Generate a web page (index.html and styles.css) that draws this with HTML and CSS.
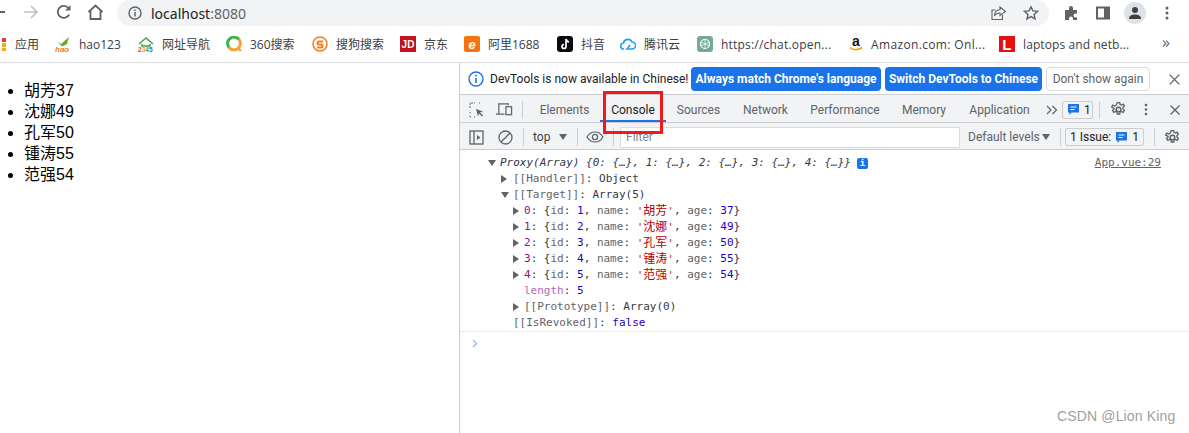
FILE: index.html
```html
<!DOCTYPE html>
<html lang="zh">
<head>
<meta charset="utf-8">
<title>localhost:8080</title>
<link rel="stylesheet" href="styles.css">
</head>
<body>
<div class="toolbar">
  <div class="nav">
    <svg class="nav-ico back" width="10" height="24" viewBox="0 0 10 24"><path d="M0 12h6" stroke="#5f6368" stroke-width="2" fill="none"/></svg>
    <svg class="nav-ico fwd" width="16" height="16" viewBox="0 0 16 16"><path d="M1 8h13M8 2l6 6-6 6" stroke="#bdc1c6" stroke-width="1.700" fill="none"/></svg>
    <svg class="nav-ico reload" width="16" height="16" viewBox="0 0 16 16"><path d="M13.200 10.500A6 6 0 1 1 12.400 4" stroke="#5f6368" stroke-width="1.800" fill="none"/><path d="M14.500 1v5.500H9z" fill="#5f6368"/></svg>
    <svg class="nav-ico home" width="17" height="16" viewBox="0 0 17 16"><path d="M1.500 8L8.500 1.500 15.500 8M3.500 7v8h10V7" stroke="#5f6368" stroke-width="1.800" fill="none"/></svg>
  </div>
  <div class="omnibox">
    <svg width="14" height="14" viewBox="0 0 14 14"><circle cx="7" cy="7" r="6" stroke="#5f6368" stroke-width="1.400" fill="none"/><path d="M7 6v4.500M7 3.400v1.500" stroke="#5f6368" stroke-width="1.500"/></svg>
    <span class="url">localhost<span class="port">:8080</span></span>
    <span class="spring"></span>
    <svg width="17" height="16" viewBox="0 0 17 16"><path d="M10 2l5.500 4.500L10 10.500V8C7 8 5.500 9 4.500 11 4.500 7.500 6.500 5 10 4.800zM12.500 10v4.500H2V5h3.500" stroke="#5f6368" stroke-width="1.100" fill="none"/></svg>
    <svg class="star" width="16" height="16" viewBox="0 0 16 16"><path d="M8 1.800l1.900 4.100 4.500.5-3.300 3 .9 4.400L8 11.600l-4 2.200.9-4.400-3.300-3 4.500-.5z" stroke="#5f6368" stroke-width="1.400" fill="none"/></svg>
  </div>
  <div class="actions">
    <svg width="16" height="16" viewBox="0 0 16 16"><path d="M1 5h4V3a2 2 0 0 1 4 0v2h4v3.500h-1.500a2 2 0 0 0 0 4H13V15H9v-1.500a2 2 0 0 0-4 0V15H1z" fill="#5f6368"/></svg>
    <svg class="a-side" width="14" height="14" viewBox="0 0 14 14"><rect x="1" y="1.500" width="12" height="11" stroke="#5f6368" stroke-width="2" fill="none"/><rect x="8" y="1.500" width="5" height="11" fill="#5f6368"/></svg>
    <span class="avatar"><svg width="14" height="14" viewBox="0 0 14 14"><circle cx="7" cy="4" r="3" fill="#3c4043"/><path d="M1 13c0-3.500 3-4.500 6-4.500s6 1 6 4.500z" fill="#3c4043"/></svg></span>
    <svg class="a-kebab" width="4" height="14" viewBox="0 0 4 14"><circle cx="2" cy="2" r="1.500" fill="#5f6368"/><circle cx="2" cy="7" r="1.500" fill="#5f6368"/><circle cx="2" cy="12" r="1.500" fill="#5f6368"/></svg>
  </div>
</div>

<div class="bookmarks">
  <div class="bm bm-apps"><span class="apps"></span><span>应用</span></div>
  <div class="bm bm-hao"><svg class="fav" width="16" height="16" viewBox="0 0 16 16"><path d="M2 5l4 3 8-7-2 7-5 2.500z" fill="#6aa92e"/><text x="0" y="15.500" class="fav-t hao-t">hao</text></svg><span>hao123</span></div>
  <div class="bm bm-2345"><svg class="fav" width="16" height="16" viewBox="0 0 16 16"><path d="M1 8l7-6 7 6M4 8v2h8V8" stroke="#4a9e46" stroke-width="1.500" fill="none"/><text x="0" y="16" class="fav-t n2345"><tspan fill="#e53935">2</tspan><tspan fill="#e8a020">3</tspan><tspan fill="#4a9e46">4</tspan><tspan fill="#1976d2">5</tspan></text></svg><span>网址导航</span></div>
  <div class="bm bm-360"><svg class="fav" width="16" height="16" viewBox="0 0 16 16"><path d="M3 11.500A6 6 0 0 1 13 3.500" stroke="#3fb24a" stroke-width="3" fill="none"/><path d="M13 3.500A6 6 0 0 1 3 11.500" stroke="#f2a33a" stroke-width="3" fill="none"/><circle cx="14" cy="14" r="1.500" fill="#f2a33a"/></svg><span>360搜索</span></div>
  <div class="bm bm-sogou"><svg class="fav" width="16" height="16" viewBox="0 0 16 16"><circle cx="8" cy="8" r="7" stroke="#f47c20" stroke-width="1.500" fill="#fff"/><path d="M11 5.500H7a1.500 1.500 0 0 0 0 3h2a1.500 1.500 0 0 1 0 3H5" stroke="#f47c20" stroke-width="2" fill="none"/></svg><span>搜狗搜索</span></div>
  <div class="bm bm-jd"><span class="fav-box jd">JD</span><span>京东</span></div>
  <div class="bm bm-ali"><span class="fav-box ali">e</span><span>阿里1688</span></div>
  <div class="bm bm-dy"><svg class="fav" width="16" height="16" viewBox="0 0 16 16"><rect width="16" height="16" rx="3" fill="#0b0b0f"/><path d="M9 3v7.500a2 2 0 1 1-2-2M9 3c.3 1.800 1.500 2.800 3 3" stroke="#fff" stroke-width="1.700" fill="none"/></svg><span>抖音</span></div>
  <div class="bm bm-tx"><svg class="fav" width="16" height="16" viewBox="0 0 16 16"><path d="M4 13a3 3 0 0 1-.5-6A4.500 4.500 0 0 1 12 6a3.500 3.500 0 0 1 0 7H7l3-4" stroke="#1da1f2" stroke-width="1.600" fill="none"/></svg><span>腾讯云</span></div>
  <div class="bm bm-gpt"><svg class="fav" width="16" height="16" viewBox="0 0 16 16"><rect width="16" height="16" rx="3" fill="#74aa9c"/><circle cx="8" cy="8" r="4.500" stroke="#fff" stroke-width="1.200" fill="none"/><path d="M8 3.500v9M4 6l8 4M12 6l-8 4" stroke="#fff" stroke-width=".7"/></svg><span>https://chat.open...</span></div>
  <div class="bm bm-amz"><svg class="fav" width="16" height="18" viewBox="0 0 16 18"><text x="8" y="11" class="fav-a">a</text><path d="M2 12.500c3 3 8 3 12 0" stroke="#f90" stroke-width="1.600" fill="none"/></svg><span>Amazon.com: Onl...</span></div>
  <div class="bm bm-lap"><span class="fav-box lap">L</span><span>laptops and netb...</span></div>
  <span class="bm-more">»</span>
</div>

<div class="main">
  <div class="page">
    <ul class="people">
      <li>胡芳37</li>
      <li>沈娜49</li>
      <li>孔军50</li>
      <li>锺涛55</li>
      <li>范强54</li>
    </ul>
  </div>
  <div class="devtools">
    <div class="infobar">
      <svg width="16" height="16" viewBox="0 0 16 16"><circle cx="8" cy="8" r="7" stroke="#1a73e8" stroke-width="1.400" fill="none"/><path d="M8 7v5M8 3.800v1.700" stroke="#1a73e8" stroke-width="1.600"/></svg>
      <span class="info-msg">DevTools is now available in Chinese!</span>
      <span class="btn btn-blue btn-match">Always match Chrome's language</span>
      <span class="btn btn-blue btn-switch">Switch DevTools to Chinese</span>
      <span class="btn btn-plain">Don't show again</span>
      <svg class="info-x" width="13" height="13" viewBox="0 0 12 12"><path d="M1.500 1.500l9 9M10.500 1.500l-9 9" stroke="#5f6368" stroke-width="1.300"/></svg>
    </div>
    <div class="tabs">
      <svg class="t-inspect" width="16" height="16" viewBox="0 0 16 16"><path d="M1 6V1h5M10 1h1M1 10v1M1 14v1h1M5 15h1" stroke="#5f6368" stroke-dasharray="2 1" fill="none"/><path d="M7 7l7 2.500-3 1 3 3-1 1-3-3-1 3z" fill="#5f6368"/></svg>
      <svg class="t-device" width="17" height="15" viewBox="0 0 18 15"><path d="M3 12V1.500h10V3M0 12.500h9" stroke="#5f6368" stroke-width="1.300" fill="none"/><rect x="10.500" y="4.500" width="6" height="8.500" stroke="#5f6368" stroke-width="1.300" fill="none"/></svg>
      <span class="sep sep-tabs"></span>
      <span class="tab tab-el">Elements</span>
      <span class="tab tab-on">Console</span>
      <span class="tab tab-so">Sources</span>
      <span class="tab tab-ne">Network</span>
      <span class="tab tab-pe">Performance</span>
      <span class="tab tab-me">Memory</span>
      <span class="tab tab-ap">Application</span>
      <svg class="t-more" width="12" height="10" viewBox="0 0 12 10"><path d="M1 1l4 4-4 4M6.500 1l4 4-4 4" stroke="#5f6368" stroke-width="1.200" fill="none"/></svg>
      <span class="badge"><svg width="11" height="11" viewBox="0 0 11 11"><path d="M0 0h11v8.500H3.500L1.500 11V8.500H0z" fill="#1a73e8"/><path d="M2.500 3h6M2.500 5.500h4" stroke="#fff"/></svg>1</span>
      <span class="sep sep-badge"></span>
      <svg class="t-gear" width="15" height="15" viewBox="0.500 0.500 15 15"><use href="#gear"/></svg>
      <svg class="t-kebab" width="4" height="13" viewBox="0 0 4 13"><circle cx="2" cy="2" r="1.300" fill="#5f6368"/><circle cx="2" cy="6.500" r="1.300" fill="#5f6368"/><circle cx="2" cy="11" r="1.300" fill="#5f6368"/></svg>
      <svg class="t-close" width="12" height="12" viewBox="0 0 12 12"><path d="M1.500 1.500l9 9M10.500 1.500l-9 9" stroke="#5f6368" stroke-width="1.300"/></svg>
    </div>
    <div class="ctools">
      <svg class="c-side" width="15" height="15" viewBox="0 0 15 15"><rect x="1" y="1" width="13" height="13" stroke="#5f6368" stroke-width="1.300" fill="none"/><path d="M5 1v13" stroke="#5f6368" stroke-width="1.300"/><path d="M8 5l3.500 2.500L8 10z" fill="#5f6368"/></svg>
      <svg class="c-clear" width="15" height="15" viewBox="0 0 15 15"><circle cx="7.500" cy="7.500" r="6.500" stroke="#5f6368" stroke-width="1.300" fill="none"/><path d="M3 12L12 3" stroke="#5f6368" stroke-width="1.300"/></svg>
      <span class="sep sep-c1"></span>
      <span class="top">top</span>
      <span class="caret"></span>
      <span class="sep sep-c2"></span>
      <svg class="c-eye" width="18" height="12" viewBox="0 0 18 12"><path d="M1 6c2-3.500 5-5 8-5s6 1.500 8 5c-2 3.500-5 5-8 5s-6-1.500-8-5z" stroke="#5f6368" stroke-width="1.200" fill="none"/><circle cx="9" cy="6" r="2.600" stroke="#5f6368" stroke-width="1.300" fill="none"/></svg>
      <span class="sep sep-c3"></span>
      <span class="filter">Filter</span>
      <span class="levels">Default levels</span>
      <span class="caret caret-lv"></span>
      <span class="sep sep-c4"></span>
      <span class="issue">1 Issue: <svg width="11" height="11" viewBox="0 0 11 11"><path d="M0 0h11v8.500H3.500L1.500 11V8.500H0z" fill="#1a73e8"/><path d="M2.500 3h6M2.500 5.500h4" stroke="#fff"/></svg> 1</span>
      <span class="sep sep-c5"></span>
      <svg class="c-gear" width="15" height="15" viewBox="0.500 0.500 15 15"><use href="#gear"/></svg>
    </div>
    <div class="console">
      <div class="row r0"><span class="tri down"></span><i class="ital">Proxy(Array) {0: {…}, 1: {…}, 2: {…}, 3: {…}, 4: {…}}</i><span class="info-i">i</span><span class="src">App.vue:29</span></div>
      <div class="row r1"><span class="tri"></span><span class="gray">[[Handler]]</span>: Object</div>
      <div class="row r1"><span class="tri down"></span><span class="gray">[[Target]]</span>: Array(5)</div>
      <div class="row r2"><span class="tri"></span><span class="key">0</span>: {<span class="gray">id</span>: <span class="num">1</span>, <span class="gray">name</span>: <span class="str">'<span class="han">胡芳</span>'</span>, <span class="gray">age</span>: <span class="num">37</span>}</div>
      <div class="row r2"><span class="tri"></span><span class="key">1</span>: {<span class="gray">id</span>: <span class="num">2</span>, <span class="gray">name</span>: <span class="str">'<span class="han">沈娜</span>'</span>, <span class="gray">age</span>: <span class="num">49</span>}</div>
      <div class="row r2"><span class="tri"></span><span class="key">2</span>: {<span class="gray">id</span>: <span class="num">3</span>, <span class="gray">name</span>: <span class="str">'<span class="han">孔军</span>'</span>, <span class="gray">age</span>: <span class="num">50</span>}</div>
      <div class="row r2"><span class="tri"></span><span class="key">3</span>: {<span class="gray">id</span>: <span class="num">4</span>, <span class="gray">name</span>: <span class="str">'<span class="han">锺涛</span>'</span>, <span class="gray">age</span>: <span class="num">55</span>}</div>
      <div class="row r2"><span class="tri"></span><span class="key">4</span>: {<span class="gray">id</span>: <span class="num">5</span>, <span class="gray">name</span>: <span class="str">'<span class="han">范强</span>'</span>, <span class="gray">age</span>: <span class="num">54</span>}</div>
      <div class="row r2 plain"><span class="lkey">length</span>: <span class="num">5</span></div>
      <div class="row r2"><span class="tri"></span><span class="gray">[[Prototype]]</span>: Array(0)</div>
      <div class="row r1 plain"><span class="gray">[[IsRevoked]]</span>: <span class="num">false</span></div>
      <div class="prompt"><svg width="6" height="9" viewBox="0 0 6 9"><path d="M1 1l3.500 3.500L1 8" stroke="#8ab4f8" stroke-width="1.200" fill="none"/></svg></div>
    </div>
  </div>
</div>

<div class="redbox"></div>
<div class="watermark">CSDN @Lion King</div>

<svg class="defs" width="0" height="0"><defs><g id="gear"><circle cx="8" cy="8" r="2.300" stroke="#5f6368" stroke-width="1.500" fill="none"/><path d="M6.800 1h2.400l.4 2 1.300.6 1.800-1 1.200 2-1.500 1.400v1.500l1.500 1.400-1.200 2-1.800-1-1.300.6-.4 2H6.800l-.4-2-1.300-.6-1.800 1-1.200-2 1.500-1.400V7L1.100 5.600l1.200-2 1.800 1 1.300-.6z" stroke="#5f6368" stroke-width="1.300" fill="none"/></g></defs></svg>
</body>
</html>
```
FILE: styles.css
```css
* { box-sizing: border-box; }
html, body { margin: 0; padding: 0; }
body {
  width: 1189px;
  height: 433px;
  overflow: hidden;
  position: relative;
  background: #fff;
  font-family: "Open Sans", "Noto Sans CJK SC", sans-serif;
  color: #3c4043;
}
svg { display: block; flex: none; }
.defs { position: absolute; }

.toolbar { height: 26px; display: flex; align-items: center; }
.nav { width: 117px; height: 26px; display: flex; align-items: center; flex: none; padding-bottom: 2px; }
.nav-ico { flex: none; }
.back { margin-left: -1px; }
.fwd { margin-left: 14px; }
.reload { margin-left: 17px; }
.home { margin-left: 15px; }
.omnibox {
  width: 932px;
  height: 26px;
  background: #f1f3f5;
  border-radius: 13px;
  display: flex;
  align-items: center;
  padding: 0 10px 0 11px;
  flex: none;
}
.url { margin-left: 9px; font-size: 14px; color: #202124; font-family: "Noto Sans", sans-serif; }
.port { color: #5f6368; }
.spring { flex: 1; }
.star { margin-left: 16px; }
.actions { display: flex; align-items: center; padding-left: 15px; }
.a-side { margin-left: 16px; }
.avatar {
  width: 22px; height: 22px; margin-left: 14px; border-radius: 11px; background: #dee1e6;
  display: flex; align-items: center; justify-content: center; flex: none;
}
.a-kebab { margin-left: 19px; }

.bookmarks {
  height: 37px;
  display: flex;
  align-items: center;
  font-size: 12px;
  color: #3c4043;
  border-bottom: 1px solid #dadce0;
  position: relative;
}
.bm { display: flex; align-items: center; flex: none; white-space: nowrap; gap: 8px; }
.fav { flex: none; }
.fav-t { font-family: "Liberation Sans", sans-serif; font-weight: 700; }
.hao-t { fill: #f47c20; font-style: italic; font-size: 8px; }
.n2345 { font-size: 6.500px; }
.fav-a { font-family: "Liberation Sans", sans-serif; font-size: 14px; font-weight: 700; text-anchor: middle; fill: #111; }
.apps { width: 4px; height: 13px; margin-right: 9px; background: linear-gradient(#e53935 0 4px, #fff 4px 5px, #f5a623 5px 9px, #fff 9px 10px, #f5a623 10px); }
.bm-apps { width: 55px; padding-left: 2px; gap: 0; }
.bm-hao { width: 83px; }
.bm-2345 { width: 88px; }
.bm-360 { width: 86px; }
.bm-sogou { width: 88px; }
.bm-jd { width: 64px; }
.bm-ali { width: 93px; }
.bm-dy { width: 63px; }
.bm-tx { width: 77px; }
.bm-gpt { width: 151px; letter-spacing: .2px; }
.bm-amz { width: 151px; gap: 7px; letter-spacing: .35px; }
.bm-lap { letter-spacing: .1px; }
.fav-box {
  width: 16px; height: 16px; display: flex; align-items: center; justify-content: center;
  color: #fff; font-weight: 700; font-size: 10px; font-family: "Liberation Sans", sans-serif; flex: none;
}
.jd { background: #c1121f; }
.ali { background: #f6740f; border-radius: 2px; font-style: italic; font-size: 13px; }
.lap { background: #e3120b; font-size: 15px; }
.bm-more { position: absolute; left: 1162px; top: 5px; font-size: 16px; color: #5f6368; }

.main { display: flex; height: 370px; }
.page { width: 460px; flex: none; border-right: 1px solid #cbcdd1; }
.people {
  margin: 17px 0 0;
  padding: 0 0 0 24px;
  font-size: 16px;
  line-height: 21px;
  color: #000;
  font-family: "Liberation Sans", "Noto Sans CJK SC", sans-serif;
}

.devtools {
  flex: 1; min-width: 0; font-size: 12px; display: flex; flex-direction: column;
  font-family: Roboto, "Noto Sans CJK SC", sans-serif;
}
.infobar {
  height: 32px; display: flex; align-items: center; padding: 1px 0 0 8px; flex: none;
  color: #202124; border-bottom: 1px solid #cbcdd1; background: #fff;
}
.info-msg { margin-left: 6px; width: 201px; white-space: nowrap; }
.btn {
  height: 24px; display: flex; align-items: center; justify-content: center; border-radius: 4px;
  white-space: nowrap; flex: none;
}
.btn-blue { background: #1a73e8; color: #fff; font-weight: 700; margin-right: 4px; }
.btn-match { width: 190px; }
.btn-switch { width: 157px; }
.btn-plain { border: 1px solid #dadce0; color: #5f6368; width: 104px; }
.info-x { margin-left: 18px; }

.tabs {
  height: 28px; display: flex; align-items: center; background: #f1f3f4; flex: none;
  border-bottom: 1px solid #cbcdd1; color: #5f6368; padding-top: 2px;
}
.t-inspect { margin-left: 9px; }
.t-device { margin-left: 11px; }
.sep { width: 1px; height: 18px; background: #cbcdd1; flex: none; }
.sep-tabs { margin: 0 6px 0 9px; }
.tab { height: 25px; display: flex; align-items: center; justify-content: center; flex: none; white-space: nowrap; }
.tab-el { width: 71px; }
.tab-on { width: 66px; color: #202124; box-shadow: inset 0 -2px 0 #1a73e8; }
.tab-so { width: 65px; }
.tab-ne { width: 69px; }
.tab-pe { width: 90px; }
.tab-me { width: 68px; }
.tab-ap { width: 83px; }
.t-more { margin-left: 5px; }
.badge {
  margin-left: 4px; width: 31px; height: 18px; border: 1px solid #cbcdd1; border-radius: 2px; display: flex;
  align-items: center; gap: 5px; padding-left: 5px; color: #202124; flex: none;
}
.sep-badge { margin-left: 6px; }
.t-gear { margin-left: 11px; }
.t-kebab { margin-left: 18px; }
.t-close { margin-left: 21px; }

.ctools {
  height: 27px; display: flex; align-items: center; background: #f1f3f4; flex: none;
  border-bottom: 1px solid #cbcdd1; color: #5f6368; padding-top: 2px;
}
.c-side { margin-left: 9px; }
.c-clear { margin-left: 14px; }
.sep-c1 { margin-left: 10px; }
.top { margin-left: 9px; color: #3c4043; width: 17px; }
.caret { width: 0; height: 0; border: 4.500px solid transparent; border-top: 6px solid #5f6368; border-bottom: 0; margin-left: 9px; flex: none; }
.sep-c2 { margin-left: 10px; }
.c-eye { margin-left: 8px; }
.sep-c3 { margin-left: 9px; }
.filter {
  width: 340px; height: 21px; background: #fff; border: 1px solid #dadce0; margin-left: 6px;
  padding-left: 5px; color: #80868b; line-height: 19px; flex: none;
}
.levels { margin-left: 8px; width: 71px; white-space: nowrap; flex: none; }
.caret-lv { margin-left: 3px; }
.sep-c4 { margin-left: 10px; }
.issue {
  margin-left: 4px; width: 79px; height: 18px; border: 1px solid #cbcdd1; border-radius: 2px; display: flex;
  align-items: center; justify-content: center; gap: 5px; color: #202124; white-space: nowrap; flex: none;
}
.sep-c5 { margin-left: 10px; }
.c-gear { margin-left: 10px; }

.console {
  flex: 1; padding-top: 5px; font-family: "DejaVu Sans Mono", "Noto Sans CJK SC", monospace; font-size: 11px;
  color: #303942;
}
.row { height: 16px; line-height: 16px; display: flex; align-items: center; white-space: pre; position: relative; }
.r0 { padding-left: 40px; }
.r1 { padding-left: 53px; }
.r2 { padding-left: 64px; }
.r0 .tri { position: absolute; left: 28px; top: 5px; }
.r1 .tri { position: absolute; left: 41px; top: 4px; }
.r2 .tri { position: absolute; left: 53px; top: 4px; }
.r1 .tri.down { top: 5px; }
.tri { width: 0; height: 0; border-left: 6px solid #5f6368; border-top: 4px solid transparent; border-bottom: 4px solid transparent; display: block; }
.tri.down { border-left: 4px solid transparent; border-right: 4px solid transparent; border-top: 6px solid #5f6368; border-bottom: 0; }
.ital { font-style: italic; }
.gray { color: #5f6368; }
.key { color: #881391; }
.num { color: #1c00cf; }
.str { color: #c41a16; }
.han { font-size: 12px; color: #b80000; font-family: "Noto Sans CJK SC", sans-serif; }
.lkey { color: #b36ab3; }
.info-i {
  width: 11px; height: 11px; border-radius: 2px; background: #1a73e8; color: #fff; font-size: 9px; line-height: 11px; text-align: center;
  margin-left: 6px; font-weight: 700;
}
.src { position: absolute; right: 28px; top: 0; color: #5f6368; text-decoration: underline; }
.prompt { height: 21px; border-top: 1px solid #e8eaed; padding: 7px 0 0 12px; }

.redbox {
  position: absolute; left: 603px; top: 91px; width: 60px; height: 43px;
  border: 3px solid #f5181a;
  pointer-events: none;
}
.watermark {
  position: absolute; left: 1057px; top: 407px; font-size: 14px; line-height: 18px; color: #a0a0a0; letter-spacing: .15px;
  font-family: "Liberation Sans", sans-serif; white-space: nowrap;
}
```
